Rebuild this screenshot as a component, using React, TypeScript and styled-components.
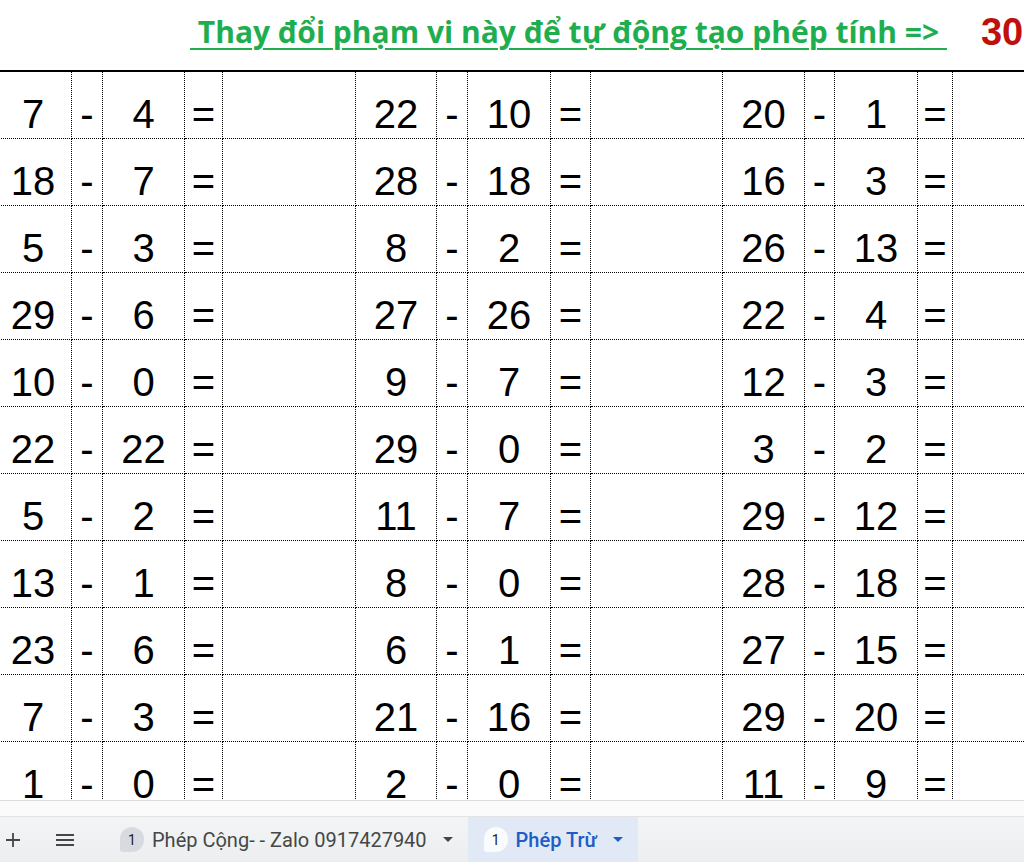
import React from "react";
import styled, { createGlobalStyle } from "styled-components";

const Global = createGlobalStyle`
  html, body { margin: 0; padding: 0; background: #fff; }
  body { width: 1024px; height: 862px; overflow: hidden; }
`;

const Page = styled.div`
  width: 1024px;
  height: 862px;
  display: flex;
  flex-direction: column;
  overflow: hidden;
  background: #fff;
`;

const Header = styled.div`
  height: 70px;
  flex: none;
  display: flex;
  align-items: flex-start;
  padding-left: 190px;
  white-space: nowrap;
`;

const Title = styled.span`
  margin-top: 12px;
  font-family: "Open Sans", "Liberation Sans", sans-serif;
  font-weight: 700;
  font-size: 30px;
  color: #1fae4f;
  text-decoration: underline;
  text-decoration-thickness: 2px;
  text-underline-offset: 5px;
  white-space: pre;
  line-height: 40px;
`;

const Range = styled.span`
  margin-left: 34px;
  margin-top: 12px;
  font-family: "Liberation Sans", Arial, sans-serif;
  font-weight: 700;
  font-size: 38px;
  line-height: 40px;
  color: #c0100c;
`;

const Sheet = styled.div`
  flex: 1;
  min-height: 0;
  overflow: hidden;
  border-top: 2px solid #000;
  border-bottom: 1px solid #dadce0;
`;

const Grid = styled.div`
  display: grid;
  margin-left: -5px;
  grid-template-columns: 77px 31px 82px 38px 133px 81px 31px 83px 40px 132px 82px 30px 83px 35px 133px;
  grid-auto-rows: 67px;
`;

const Cell = styled.div`
  box-sizing: border-box;
  border-right: 1px dotted #000;
  border-bottom: 1px dotted #000;
  display: flex;
  align-items: flex-end;
  justify-content: center;
  padding-bottom: 4px;
  font-family: "Liberation Sans", Arial, sans-serif;
  font-size: 40px;
  line-height: 40px;
  color: #000;
`;

const Gap = styled.div`
  height: 15px;
  flex: none;
  background: #fbfbfb;
  border-bottom: 1px solid #e3e3e3;
`;

const TabBar = styled.div`
  height: 45px;
  flex: none;
  display: flex;
  align-items: stretch;
  background: linear-gradient(#f3f4f5, #eceef0);
  font-family: Roboto, "Noto Sans", sans-serif;
  font-size: 20px;
  color: #444746;
`;

const ToolButton = styled.div<{ $w: number }>`
  width: ${(p) => p.$w}px;
  display: flex;
  align-items: center;
  justify-content: center;
`;

const Tab = styled.div<{ $active?: boolean }>`
  display: flex;
  align-items: center;
  gap: 8px;
  padding: 0 15px 0 16px;
  background: ${(p) => (p.$active ? "#e1e9f7" : "transparent")};
  color: ${(p) => (p.$active ? "#1e5cc8" : "#444746")};
  font-weight: ${(p) => (p.$active ? 500 : 400)};
  white-space: nowrap;
`;

const Badge = styled.span<{ $active?: boolean }>`
  width: 24px;
  height: 25px;
  border-radius: 13px 13px 13px 3px;
  background: ${(p) => (p.$active ? "#fafbfd" : "#d7dbe1")};
  color: #202124;
  font-size: 14px;
  font-weight: 400;
  display: flex;
  align-items: center;
  justify-content: center;
`;

const Caret = styled.span<{ $color: string }>`
  width: 0;
  height: 0;
  margin-left: 8px;
  border-left: 5px solid transparent;
  border-right: 5px solid transparent;
  border-top: 5px solid ${(p) => p.$color};
`;

const groups: [number, number][][] = [
  [[7, 4], [18, 7], [5, 3], [29, 6], [10, 0], [22, 22], [5, 2], [13, 1], [23, 6], [7, 3], [1, 0]],
  [[22, 10], [28, 18], [8, 2], [27, 26], [9, 7], [29, 0], [11, 7], [8, 0], [6, 1], [21, 16], [2, 0]],
  [[20, 1], [16, 3], [26, 13], [22, 4], [12, 3], [3, 2], [29, 12], [28, 18], [27, 15], [29, 20], [11, 9]],
];

export default function App() {
  const cells: React.ReactNode[] = [];
  for (let r = 0; r < 11; r++) {
    groups.forEach((g, gi) => {
      const [a, b] = g[r];
      cells.push(<Cell key={`${r}-${gi}-a`}>{a}</Cell>);
      cells.push(<Cell key={`${r}-${gi}-m`}>-</Cell>);
      cells.push(<Cell key={`${r}-${gi}-b`}>{b}</Cell>);
      cells.push(<Cell key={`${r}-${gi}-e`}>=</Cell>);
      cells.push(<Cell key={`${r}-${gi}-x`} />);
    });
  }
  return (
    <Page>
      <Global />
      <Header>
        <Title>{" Thay đổi phạm vi này để tự động tạo phép tính => "}</Title>
        <Range>30</Range>
      </Header>
      <Sheet>
        <Grid>{cells}</Grid>
      </Sheet>
      <Gap />
      <TabBar>
        <ToolButton $w={26}>
          <svg width="16" height="16" viewBox="0 0 16 16">
            <path d="M8 1v14M1 8h14" stroke="#444746" strokeWidth="1.8" />
          </svg>
        </ToolButton>
        <ToolButton $w={78}>
          <svg width="20" height="14" viewBox="0 0 20 14">
            <path d="M1 2h18M1 7h18M1 12h18" stroke="#444746" strokeWidth="1.8" />
          </svg>
        </ToolButton>
        <Tab>
          <Badge>1</Badge>
          <span>Phép Cộng- - Zalo 0917427940</span>
          <Caret $color="#444746" />
        </Tab>
        <Tab $active>
          <Badge $active>1</Badge>
          <span>Phép Trừ</span>
          <Caret $color="#1e5cc8" />
        </Tab>
      </TabBar>
    </Page>
  );
}
